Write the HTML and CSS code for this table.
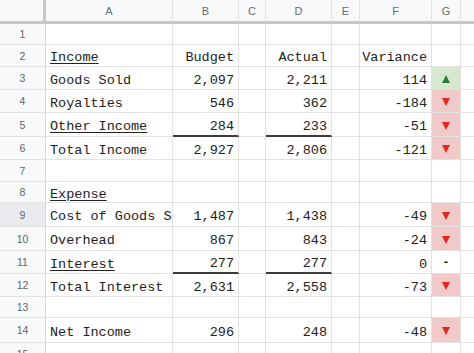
FILE: index.html
```html
<!DOCTYPE html>
<html>
<head>
<meta charset="utf-8">
<link rel="stylesheet" href="styles.css">
</head>
<body>
<div class="sheet">
  <div class="row head">
    <div class="c rh corner"></div>
    <div class="c ch">A</div>
    <div class="c ch">B</div>
    <div class="c ch">C</div>
    <div class="c ch">D</div>
    <div class="c ch">E</div>
    <div class="c ch">F</div>
    <div class="c ch">G</div>
    <div class="c ch"></div>
  </div>
  <div class="row h21">
    <div class="c rh">1</div><div class="c"></div><div class="c"></div><div class="c"></div><div class="c"></div><div class="c"></div><div class="c"></div><div class="c"></div><div class="c"></div>
  </div>
  <div class="row h22">
    <div class="c rh">2</div><div class="c t"><u>Income</u></div><div class="c n">Budget</div><div class="c"></div><div class="c n">Actual</div><div class="c"></div><div class="c n">Variance</div><div class="c"></div><div class="c"></div>
  </div>
  <div class="row h23">
    <div class="c rh">3</div><div class="c t">Goods Sold</div><div class="c n">2,097</div><div class="c"></div><div class="c n">2,211</div><div class="c"></div><div class="c n">114</div><div class="c g up"><span class="tri-up"></span></div><div class="c"></div>
  </div>
  <div class="row h23">
    <div class="c rh">4</div><div class="c t">Royalties</div><div class="c n">546</div><div class="c"></div><div class="c n">362</div><div class="c"></div><div class="c n">-184</div><div class="c g down"><span class="tri-down"></span></div><div class="c"></div>
  </div>
  <div class="row h24">
    <div class="c rh">5</div><div class="c t"><u>Other Income</u></div><div class="c n sum">284</div><div class="c"></div><div class="c n sum">233</div><div class="c"></div><div class="c n">-51</div><div class="c g down"><span class="tri-down"></span></div><div class="c"></div>
  </div>
  <div class="row h23">
    <div class="c rh">6</div><div class="c t">Total Income</div><div class="c n">2,927</div><div class="c"></div><div class="c n">2,806</div><div class="c"></div><div class="c n">-121</div><div class="c g down"><span class="tri-down"></span></div><div class="c"></div>
  </div>
  <div class="row h22">
    <div class="c rh">7</div><div class="c"></div><div class="c"></div><div class="c"></div><div class="c"></div><div class="c"></div><div class="c"></div><div class="c"></div><div class="c"></div>
  </div>
  <div class="row h21">
    <div class="c rh">8</div><div class="c t"><u>Expense</u></div><div class="c"></div><div class="c"></div><div class="c"></div><div class="c"></div><div class="c"></div><div class="c"></div><div class="c"></div>
  </div>
  <div class="row h24">
    <div class="c rh active">9</div><div class="c t">Cost of Goods Sold</div><div class="c n">1,487</div><div class="c"></div><div class="c n">1,438</div><div class="c"></div><div class="c n">-49</div><div class="c g down"><span class="tri-down"></span></div><div class="c"></div>
  </div>
  <div class="row h24">
    <div class="c rh">10</div><div class="c t">Overhead</div><div class="c n">867</div><div class="c"></div><div class="c n">843</div><div class="c"></div><div class="c n">-24</div><div class="c g down"><span class="tri-down"></span></div><div class="c"></div>
  </div>
  <div class="row h23">
    <div class="c rh">11</div><div class="c t"><u>Interest</u></div><div class="c n sum">277</div><div class="c"></div><div class="c n sum">277</div><div class="c"></div><div class="c n">0</div><div class="c g"><span class="dash">-</span></div><div class="c"></div>
  </div>
  <div class="row h23">
    <div class="c rh">12</div><div class="c t">Total Interest</div><div class="c n">2,631</div><div class="c"></div><div class="c n">2,558</div><div class="c"></div><div class="c n">-73</div><div class="c g down"><span class="tri-down"></span></div><div class="c"></div>
  </div>
  <div class="row h21">
    <div class="c rh">13</div><div class="c"></div><div class="c"></div><div class="c"></div><div class="c"></div><div class="c"></div><div class="c"></div><div class="c"></div><div class="c"></div>
  </div>
  <div class="row h25">
    <div class="c rh">14</div><div class="c t">Net Income</div><div class="c n">296</div><div class="c"></div><div class="c n">248</div><div class="c"></div><div class="c n">-48</div><div class="c g down"><span class="tri-down"></span></div><div class="c"></div>
  </div>
  <div class="row h23">
    <div class="c rh">15</div><div class="c"></div><div class="c"></div><div class="c"></div><div class="c"></div><div class="c"></div><div class="c"></div><div class="c"></div><div class="c"></div>
  </div>
</div>
</body>
</html>
```

FILE: styles.css
```css
html, body {
  margin: 0;
  padding: 0;
  background: #ffffff;
  overflow: hidden;
}
.sheet {
  width: 474px;
  font-family: "Liberation Mono", "DejaVu Sans Mono", monospace;
  font-size: 13.5px;
  color: #222222;
}
.row {
  display: grid;
  grid-template-columns: 46px 127px 66px 27px 66px 28px 72px 29px 40px;
}
.c {
  box-sizing: border-box;
  border-right: 1px solid #e2e2e2;
  border-bottom: 1px solid #e2e2e2;
  display: flex;
  align-items: center;
  white-space: nowrap;
  overflow: hidden;
  padding: 4px 4px 0 4px;
}
.head { height: 24px; }
.head .c {
  background: #f8f9fa;
  border-bottom: 3px solid #c6c6c6;
  justify-content: center;
  font-family: "Liberation Sans", Arial, sans-serif;
  font-size: 11px;
  color: #666a6e;
  padding: 0;
}
.head .corner {
  border-right: 3px solid #c6c6c6;
}
.rh {
  background: #f8f9fa;
  justify-content: center;
  font-family: "Liberation Sans", Arial, sans-serif;
  font-size: 10.5px;
  color: #5f6368;
  padding: 0 0 0 0;
  border-right: 1px solid #d6d6d6;
}
.rh.active {
  background: #e8eaed;
}
.h21 { height: 21px; }
.h22 { height: 22px; }
.h23 { height: 23px; }
.h24 { height: 24px; }
.h25 { height: 25px; }
.t { justify-content: flex-start; }
.n { justify-content: flex-end; }
.t u {
  text-decoration: underline;
  text-underline-offset: 2px;
  text-decoration-thickness: 1px;
}
.sum {
  border-bottom: 2px solid #3a3a3a;
}
.g {
  justify-content: center;
  padding: 0;
}
.g.up { background: #d6e8d0; }
.g.down { background: #f1c9c8; }
.tri-up {
  width: 0;
  height: 0;
  border-left: 4.5px solid transparent;
  border-right: 4.5px solid transparent;
  border-bottom: 8px solid #2e7d32;
  margin-top: 1px;
}
.tri-down {
  width: 0;
  height: 0;
  border-left: 4.5px solid transparent;
  border-right: 4.5px solid transparent;
  border-top: 8px solid #e0281e;
  margin-top: 2px;
}
.dash {
  font-family: "Liberation Sans", Arial, sans-serif;
  font-size: 12px;
  color: #222;
  font-weight: bold;
}
```
